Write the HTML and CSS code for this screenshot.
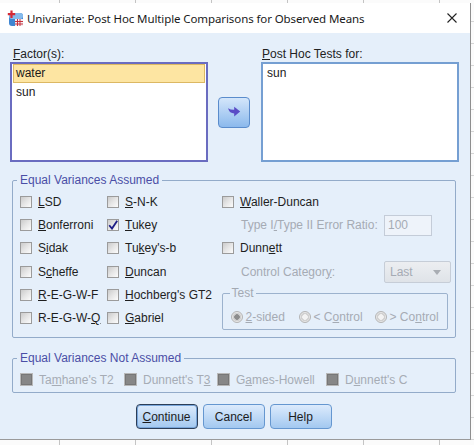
FILE: index.html
```html
<!DOCTYPE html>
<html lang="en">
<head>
  <meta charset="UTF-8">
  <meta name="viewport" content="width=device-width, initial-scale=1.0">
  <title>Univariate: Post Hoc Multiple Comparisons for Observed Means</title>
  <link rel="stylesheet" href="styles.css">
</head>
<body>
  <div class="dialog">
    <div class="titlebar">
      <svg class="app-icon" width="17" height="17" viewBox="0 0 17 17">
        <rect x="2" y="3" width="14" height="13" rx="3" fill="#3f86d2"/>
        <rect x="2" y="3" width="14" height="6" rx="3" fill="#86bbec"/>
        <rect x="8" y="9" width="8" height="7" fill="#f2eef2"/>
        <path d="M8 11.5h8M8 14h8M10.5 9v7M13 9v7" stroke="#c8323e" stroke-width="1"/>
        <path d="M4.5 0.5v7.5M0.8 4.2h7.4" stroke="#d42a36" stroke-width="2.2"/>
      </svg>
      <span class="title">Univariate: Post Hoc Multiple Comparisons for Observed Means</span>
      <svg class="close" width="10" height="10" viewBox="0 0 10 10">
        <path d="M0.5 0.5L9.5 9.5M9.5 0.5L0.5 9.5" stroke="#222" stroke-width="1.1"/>
      </svg>
    </div>

    <div class="dialog-body">
      <!-- source and target variable lists -->
      <div class="lists">
        <label class="list-label left"><u>F</u>actor(s):</label>
        <span></span>
        <label class="list-label"><u>P</u>ost Hoc Tests for:</label>

        <div class="listbox focused">
          <div class="item selected">water</div>
          <div class="item">sun</div>
        </div>
        <button class="move-btn">
          <svg width="14" height="12" viewBox="0 0 14 12">
            <path d="M1 2.2 Q2.6 7.4 7.2 7.4 V10.6 L13.2 5.6 L7.2 0.8 V3.8 Q3.8 4 1 2.2Z" fill="#5a4cc6"/>
          </svg>
        </button>
        <div class="listbox">
          <div class="item">sun</div>
        </div>
      </div>

      <fieldset class="group">
        <legend>Equal Variances Assumed</legend>
        <div class="test-grid">
          <label class="check"><span class="box"></span><span><u>L</u>SD</span></label>
          <label class="check"><span class="box"></span><span><u>S</u>-N-K</span></label>
          <label class="check"><span class="box"></span><span><u>W</u>aller-Duncan</span></label>

          <label class="check"><span class="box"></span><span><u>B</u>onferroni</span></label>
          <label class="check"><span class="box checked">
            <svg width="10" height="10" viewBox="0 0 10 10"><path d="M1.2 5.2 L4 8.6 L9.2 0.8" fill="none" stroke="#1e1e86" stroke-width="1.8"/></svg>
          </span><span><u>T</u>ukey</span></label>
          <div class="sub-option">
            <span class="sub-label">Type I<u>/</u>Type II Error Ratio:</span>
            <span class="num-field">100</span>
          </div>

          <label class="check"><span class="box"></span><span>S<u>i</u>dak</span></label>
          <label class="check"><span class="box"></span><span>Tu<u>k</u>ey's-b</span></label>
          <label class="check"><span class="box"></span><span>Dunn<u>e</u>tt</span></label>

          <label class="check"><span class="box"></span><span>S<u>c</u>heffe</span></label>
          <label class="check"><span class="box"></span><span><u>D</u>uncan</span></label>
          <div class="sub-option">
            <span class="sub-label">Control Categor<u>y</u>:</span>
            <span class="combo">Last<i class="caret"></i></span>
          </div>

          <label class="check"><span class="box"></span><span><u>R</u>-E-G-W-F</span></label>
          <label class="check"><span class="box"></span><span><u>H</u>ochberg's GT2</span></label>
          <fieldset class="test-box">
            <legend>Test</legend>
            <div class="radios">
              <span class="radio"><span class="dot on"></span><span><u>2</u>-sided</span></span>
              <span class="radio"><span class="dot"></span><span>&lt; C<u>o</u>ntrol</span></span>
              <span class="radio"><span class="dot"></span><span>&gt; Co<u>n</u>trol</span></span>
            </div>
          </fieldset>

          <label class="check"><span class="box"></span><span>R-E-G-W-<u>Q</u></span></label>
          <label class="check"><span class="box"></span><span><u>G</u>abriel</span></label>
        </div>
      </fieldset>

      <fieldset class="group unequal">
        <legend>Equal Variances Not Assumed</legend>
        <div class="unequal-row">
          <span class="check disabled"><span class="box"></span><span>Ta<u>m</u>hane's T2</span></span>
          <span class="check disabled"><span class="box"></span><span>Dunnett's T<u>3</u></span></span>
          <span class="check disabled"><span class="box"></span><span>G<u>a</u>mes-Howell</span></span>
          <span class="check disabled"><span class="box"></span><span>D<u>u</u>nnett's C</span></span>
        </div>
      </fieldset>

      <div class="actions">
        <button class="btn default"><u>C</u>ontinue</button>
        <button class="btn">Cancel</button>
        <button class="btn">Help</button>
      </div>
    </div>
  </div>
</body>
</html>
```

FILE: styles.css
```css
* {
  box-sizing: border-box;
}
html, body {
  margin: 0;
}
body {
  width: 474px;
  height: 445px;
  overflow: hidden;
  font-family: "Liberation Sans", Arial, sans-serif;
  font-size: 12px;
  color: #1e1e1e;
  background-color: #fbfbfb;
  /* spreadsheet grid showing around the dialog */
  background-image:
    repeating-linear-gradient(to right, transparent 0 59px, #c4c4c4 59px 60px, transparent 60px 76px),
    repeating-linear-gradient(to bottom, transparent 0 21px, #d6d6d6 21px 22px);
}
u {
  text-underline-offset: 1px;
}

.dialog {
  width: 471px;
  height: 437px;
  margin-top: 3px;
  background: #e5effa;
  border-right: 1px solid #8e8e8e;
  border-bottom: 1px solid #9a9a9a;
  display: flex;
  flex-direction: column;
}

/* title bar */
.titlebar {
  height: 30px;
  background: #fff;
  display: flex;
  align-items: center;
  padding-left: 7px;
}
.app-icon {
  margin-right: 3px;
}
.title {
  font-family: "Noto Sans", "Open Sans", sans-serif;
  font-size: 11.5px;
  color: #1a1a1a;
  letter-spacing: -0.1px;
}
.close {
  margin-left: auto;
  margin-right: 13px;
}

.dialog-body {
  flex: 1;
  padding: 13px 11px 0 10px;
}

/* variable lists */
.lists {
  display: grid;
  grid-template-columns: 198px 1fr 198px;
  grid-template-rows: 16px 100px;
}
.list-label {
  line-height: 16px;
  padding-left: 1px;
  color: #222;
}
.list-label.left {
  padding-left: 3px;
}
.listbox {
  background: #fff;
  border: 2px solid #759fd2;
  padding: 0 1px;
}
.listbox.focused {
  border-color: #6a6cc0;
}
.item {
  height: 19px;
  line-height: 17px;
  padding-left: 2px;
  border: 1px solid transparent;
  color: #1a1a1a;
}
.item.selected {
  background: #fde5a2;
  border-color: #dcb863;
}
.move-btn {
  align-self: center;
  margin-left: 10px;
  width: 32px;
  height: 31px;
  padding: 0;
  border: 1px solid #5a8ccc;
  border-radius: 4px;
  background: linear-gradient(#d4e6fb, #8bb9ec);
  display: flex;
  align-items: center;
  justify-content: center;
}

/* option groups */
.group {
  margin: 11px 3px 0 2px;
  padding: 2.5px 5px 7px 7px;
  border: 1px solid #93abc9;
  border-radius: 2px;
  min-width: 0;
}
.group legend {
  padding: 0 3px;
  margin-left: -3px;
  line-height: 15px;
  color: #4a4ea6;
}
.test-grid {
  display: grid;
  grid-template-columns: 87px 115px 1fr;
  grid-auto-rows: 23.2px;
}
.check {
  display: flex;
  align-items: center;
  gap: 6px;
  white-space: nowrap;
  color: #1e1e1e;
}
.box {
  width: 12px;
  height: 12px;
  flex: none;
  border: 1px solid #9b9b9b;
  background: linear-gradient(135deg, #cbcbcb 0%, #e6e6e6 50%, #fcfcfc 100%);
  display: flex;
  align-items: center;
  justify-content: center;
}
.box.checked svg {
  margin-top: -1px;
}

.sub-option {
  display: flex;
  align-items: center;
  padding-left: 19px;
  color: #a5abb4;
}
.sub-label {
  width: 143px;
  flex: none;
}
.num-field {
  width: 48px;
  height: 21px;
  line-height: 19px;
  padding-left: 3px;
  border: 1px solid #c4ccd8;
  background: #eef3fa;
}
.combo {
  position: relative;
  width: 67px;
  height: 22px;
  line-height: 20px;
  padding-left: 5px;
  border: 1px solid #c6cdd7;
  border-radius: 2px;
  background: linear-gradient(#eceef1, #dfe3e8);
}
.caret {
  position: absolute;
  right: 9px;
  top: 8px;
  border-left: 4px solid transparent;
  border-right: 4px solid transparent;
  border-top: 5px solid #a9adb3;
}

/* Dunnett test direction */
.test-box {
  grid-column: 3;
  grid-row: 5 / span 2;
  align-self: start;
  width: 226px;
  margin: 2.8px 0 0 0;
  padding: 7px 4px 2px 7.5px;
  border: 1px solid #9cb2cd;
  border-radius: 2px;
  min-width: 0;
}
.test-box legend {
  padding: 0 2px;
  margin-left: -1px;
  line-height: 14px;
  color: #a3a9b2;
}
.radios {
  display: flex;
  height: 20px;
  align-items: center;
  color: #a5abb4;
}
.radio {
  display: flex;
  align-items: center;
  gap: 3px;
  white-space: nowrap;
}
.radio:nth-child(1) {
  width: 68px;
}
.radio:nth-child(2) {
  width: 76px;
}
.dot {
  width: 12px;
  height: 12px;
  flex: none;
  border-radius: 50%;
  border: 1px solid #b4b4b4;
  background: radial-gradient(circle, #f3f3f3 0 2.5px, #d0d0d0 3px 4px, #e7e7e7 4.5px);
}
.dot.on {
  background: radial-gradient(circle, #8d8d8d 0 2.5px, #d0d0d0 3px 4px, #e7e7e7 4.5px);
}

.unequal {
  margin-top: 13.5px;
  padding: 2px 5px 0.5px 7px;
}
.unequal-row {
  display: grid;
  grid-template-columns: 104px 93px 109px auto;
  height: 23px;
}
.check.disabled {
  color: #a6acb5;
}
.check.disabled .box {
  width: 13px;
  height: 13px;
  border: 1px solid #b8b8b8;
  background: #878787;
  box-shadow: inset 0 0 0 1px #777;
}

/* dialog buttons */
.actions {
  display: flex;
  justify-content: center;
  gap: 5px;
  margin-top: 11.5px;
  padding-right: 2px;
}
.btn {
  width: 62px;
  height: 25px;
  padding: 0;
  font-family: "Liberation Sans", Arial, sans-serif;
  font-size: 12px;
  color: #1c1c1c;
  border: 1px solid #6597d0;
  border-radius: 4px;
  background: linear-gradient(#dcebfc, #a3c8f0);
}
.btn.default {
  border-color: #2c3e58;
  box-shadow: inset 0 0 0 1px #79a6da;
}
```
